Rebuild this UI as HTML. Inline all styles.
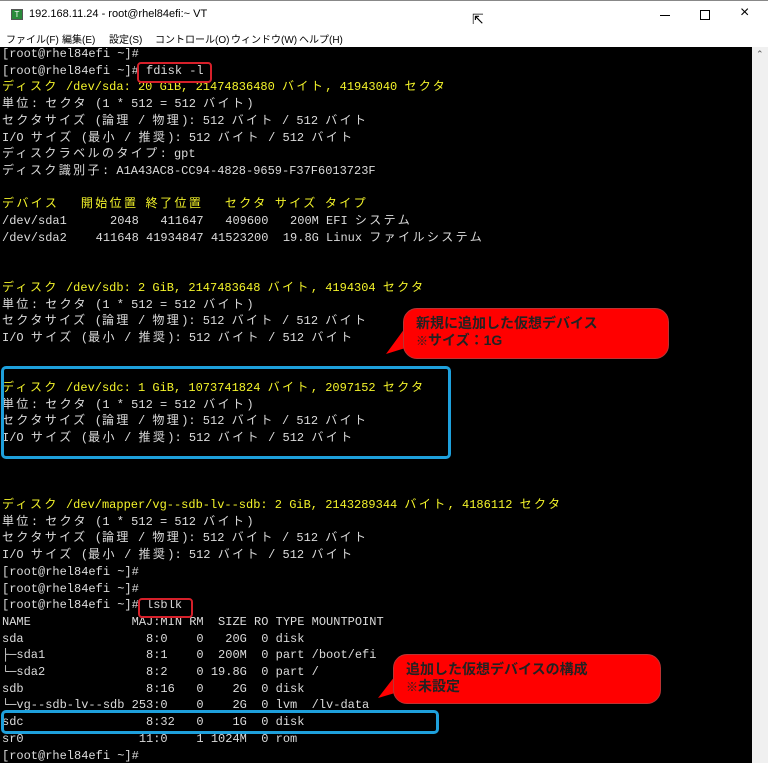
<!DOCTYPE html>
<html><head><meta charset="utf-8"><style>
*{margin:0;padding:0;box-sizing:border-box}
body{width:768px;height:763px;overflow:hidden;background:#fff;position:relative;font-family:"Liberation Sans","Noto Sans CJK JP",sans-serif}
.title{position:absolute;left:0;top:0;width:768px;height:29px;background:#fff;border-top:1px solid #888}
.title .t{position:absolute;left:29px;top:7px;font-size:11px;color:#000}
.icon{position:absolute;left:11px;top:8px;width:12px;height:11px;background:#2a8a3a;border:1px solid #555;color:#fff;font-size:8px;line-height:9px;text-align:center}
.menu{position:absolute;left:0;top:29px;width:768px;height:18px;background:#fff;font-size:10px;color:#000}
.menu span{position:absolute;top:2px}
.term{position:absolute;left:0;top:47px;width:752px;height:716px;background:#000}
.sb{position:absolute;left:752px;top:47px;width:16px;height:716px;background:#f0f0f0}
pre{position:absolute;left:2px;top:46px;font-family:"Liberation Mono","Noto Sans CJK JP",monospace;font-size:12px;line-height:16.71px;color:#dcdcdc;white-space:pre}
pre i{font-style:normal;letter-spacing:2.4px}
.y{color:#f4f42a}
.box{position:absolute;border-radius:4px}
.red{border:2px solid #d6202a}
.blue{border:3px solid #1ea0dc;border-radius:5px}
.call{position:absolute;background:#f00;border:1px solid #b33;border-radius:14px;color:#222;font-weight:bold;font-size:14px;line-height:17px;padding:6px 0 0 12px}
.call small{font-size:12px}
</style></head><body>
<div class="title"><div class="icon">T</div><div class="t">192.168.11.24 - root@rhel84efi:~ VT</div>
<div style="position:absolute;left:472px;top:10px;font-size:14px">&#8689;</div>
<div style="position:absolute;left:660px;top:14px;width:10px;height:1px;background:#000"></div>
<div style="position:absolute;left:700px;top:9px;width:10px;height:10px;border:1px solid #000"></div>
<div style="position:absolute;left:740px;top:3px;font-size:16px;color:#000">&#215;</div>
</div>
<div class="menu"><span style="left:6px">ファイル(F)</span><span style="left:62px">編集(E)</span><span style="left:109px">設定(S)</span><span style="left:155px">コントロール(O)</span><span style="left:231px">ウィンドウ(W)</span><span style="left:299px">ヘルプ(H)</span></div>
<div class="term"></div>
<div class="sb"><div style="position:absolute;left:4px;top:2px;font-size:9px;color:#555">&#8963;</div></div>
<pre>[root@rhel84efi ~]#
[root@rhel84efi ~]# fdisk -l
<span class="y"><i>ディスク</i> /dev/sda: 20 GiB, 21474836480 <i>バイト</i>, 41943040 <i>セクタ</i></span>
<i>単位</i>: <i>セクタ</i> (1 * 512 = 512 <i>バイト</i>)
<i>セクタサイズ</i> (<i>論理</i> / <i>物理</i>): 512 <i>バイト</i> / 512 <i>バイト</i>
I/O <i>サイズ</i> (<i>最小</i> / <i>推奨</i>): 512 <i>バイト</i> / 512 <i>バイト</i>
<i>ディスクラベルのタイプ</i>: gpt
<i>ディスク識別子</i>: A1A43AC8-CC94-4828-9659-F37F6013723F

<span class="y"><i>デバイス</i>   <i>開始位置</i> <i>終了位置</i>   <i>セクタ</i> <i>サイズ</i> <i>タイプ</i></span>
/dev/sda1      2048   411647   409600   200M EFI <i>システム</i>
/dev/sda2    411648 41934847 41523200  19.8G Linux <i>ファイルシステム</i>


<span class="y"><i>ディスク</i> /dev/sdb: 2 GiB, 2147483648 <i>バイト</i>, 4194304 <i>セクタ</i></span>
<i>単位</i>: <i>セクタ</i> (1 * 512 = 512 <i>バイト</i>)
<i>セクタサイズ</i> (<i>論理</i> / <i>物理</i>): 512 <i>バイト</i> / 512 <i>バイト</i>
I/O <i>サイズ</i> (<i>最小</i> / <i>推奨</i>): 512 <i>バイト</i> / 512 <i>バイト</i>


<span class="y"><i>ディスク</i> /dev/sdc: 1 GiB, 1073741824 <i>バイト</i>, 2097152 <i>セクタ</i></span>
<i>単位</i>: <i>セクタ</i> (1 * 512 = 512 <i>バイト</i>)
<i>セクタサイズ</i> (<i>論理</i> / <i>物理</i>): 512 <i>バイト</i> / 512 <i>バイト</i>
I/O <i>サイズ</i> (<i>最小</i> / <i>推奨</i>): 512 <i>バイト</i> / 512 <i>バイト</i>



<span class="y"><i>ディスク</i> /dev/mapper/vg--sdb-lv--sdb: 2 GiB, 2143289344 <i>バイト</i>, 4186112 <i>セクタ</i></span>
<i>単位</i>: <i>セクタ</i> (1 * 512 = 512 <i>バイト</i>)
<i>セクタサイズ</i> (<i>論理</i> / <i>物理</i>): 512 <i>バイト</i> / 512 <i>バイト</i>
I/O <i>サイズ</i> (<i>最小</i> / <i>推奨</i>): 512 <i>バイト</i> / 512 <i>バイト</i>
[root@rhel84efi ~]#
[root@rhel84efi ~]#
[root@rhel84efi ~]# lsblk
NAME              MAJ:MIN RM  SIZE RO TYPE MOUNTPOINT
sda                 8:0    0   20G  0 disk
├─sda1              8:1    0  200M  0 part /boot/efi
└─sda2              8:2    0 19.8G  0 part /
sdb                 8:16   0    2G  0 disk
└─vg--sdb-lv--sdb 253:0    0    2G  0 lvm  /lv-data
sdc                 8:32   0    1G  0 disk
sr0                11:0    1 1024M  0 rom
[root@rhel84efi ~]#</pre>
<div class="box red" style="left:137px;top:62px;width:75px;height:21px"></div>
<div class="box red" style="left:138px;top:598px;width:55px;height:20px"></div>
<div class="box blue" style="left:1px;top:366px;width:450px;height:93px"></div>
<div class="box blue" style="left:1px;top:710px;width:438px;height:24px"></div>
<svg style="position:absolute;left:0;top:0" width="768" height="763"><polygon points="386,354 405,328 415,345" fill="#f00"/><polygon points="378,698 395,676 405,690" fill="#f00"/></svg>
<div class="call" style="left:403px;top:308px;width:266px;height:51px">新規に追加した仮想デバイス<br><small>※</small>サイズ：1G</div>
<div class="call" style="left:393px;top:654px;width:268px;height:50px">追加した仮想デバイスの構成<br><small>※</small>未設定</div>
</body></html>
